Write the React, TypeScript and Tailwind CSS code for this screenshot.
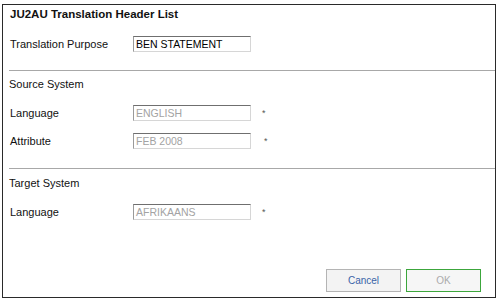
const font = "font-['Liberation_Sans',Arial,sans-serif]";

function Field({ value, disabled }: { value: string; disabled?: boolean }) {
    return (
        <div className="w-[118px] h-[16px] border border-t-[#6f6f6f] border-l-[#9a9a9a] border-r-[#d6d6d6] border-b-[#d6d6d6] bg-white flex items-center pl-[2px]">
            <span className={`text-[10.5px] leading-none ${disabled ? 'text-[#a3a3a3]' : 'text-black'}`}>{value}</span>
        </div>
    );
}

function Row({ label, value, disabled, star, starGap = 'ml-[11px]', mt }: { label: string; value: string; disabled?: boolean; star?: boolean; starGap?: string; mt: string }) {
    return (
        <div className={`flex items-center h-[16px] pl-[7px] ${mt}`}>
            <span className="w-[123px] text-[11px] text-[#111]">{label}</span>
            <Field value={value} disabled={disabled} />
            {star && <span className={`${starGap} text-[9px] text-[#555] leading-none antialiased`}>*</span>}
        </div>
    );
}

export default function App() {
    return (
        <div className={`w-[501px] h-[301px] bg-white pt-[4px] pl-[2px] ${font}`}>
            <div className="w-[494px] h-[294px] border border-[#2a2a2a] flex flex-col">
                <div className="h-[20px] flex items-center pl-[7px]">
                    <span className="text-[11.5px] font-bold text-[#111]">JU2AU Translation Header List</span>
                </div>

                <Row label="Translation Purpose" value="BEN STATEMENT" mt="mt-[11px]" />

                <div className="mt-[18px] ml-[6px] h-px bg-[#a8a8a8]" />

                <div className="mt-[6px] h-[14px] flex items-center pl-[6px]">
                    <span className="text-[11px] text-[#111]">Source System</span>
                </div>

                <Row label="Language" value="ENGLISH" disabled star mt="mt-[14px]" />
                <Row label="Attribute" value="FEB 2008" disabled star starGap="ml-[13px]" mt="mt-[12px]" />

                <div className="mt-[19px] ml-[6px] h-px bg-[#a8a8a8]" />

                <div className="mt-[7px] h-[14px] flex items-center pl-[6px]">
                    <span className="text-[11px] text-[#111]">Target System</span>
                </div>

                <Row label="Language" value="AFRIKAANS" disabled star mt="mt-[14px]" />

                <div className="mt-[49px] flex justify-end gap-[5px] pr-[14px]">
                    <button className="w-[75px] h-[23px] border border-[#b4b4b4] bg-[#f3f3f3] text-[10px] text-[#3a64a8]">Cancel</button>
                    <button className="w-[75px] h-[23px] border border-[#3ca63c] bg-[#f6f6f6] text-[10px] text-[#ababab]">OK</button>
                </div>
            </div>
        </div>
    );
}
